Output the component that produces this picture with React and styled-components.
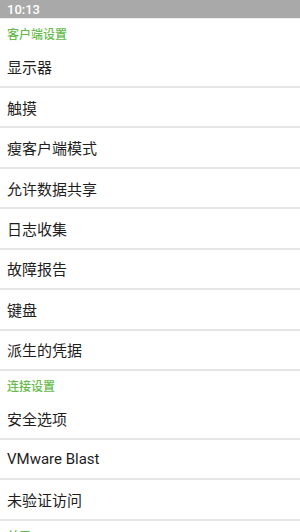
import styled, { createGlobalStyle } from "styled-components";

const GlobalStyle = createGlobalStyle`
  html, body {
    margin: 0;
    padding: 0;
    background: #ffffff;
  }
  body {
    font-family: Roboto, "Noto Sans CJK SC", sans-serif;
  }
`;

const sections = [
  {
    title: "客户端设置",
    items: [
      "显示器",
      "触摸",
      "瘦客户端模式",
      "允许数据共享",
      "日志收集",
      "故障报告",
      "键盘",
      "派生的凭据",
    ],
  },
  {
    title: "连接设置",
    items: ["安全选项", "VMware Blast", "未验证访问"],
  },
  {
    title: "关于",
    items: ["版本"],
  },
];

const Screen = styled.div`
  width: 300px;
  height: 532px;
  overflow: hidden;
  background: #ffffff;
`;

const StatusBar = styled.div`
  height: 18px;
  background: #a9a9a9;
  border-bottom: 1px solid #ececec;
  display: flex;
  align-items: center;
  padding-left: 7px;
  color: #ffffff;
  font-size: 13px;
  font-weight: 500;
`;

const SectionTitle = styled.div`
  height: 28.5px;
  display: flex;
  align-items: flex-start;
  padding: 6px 0 0 7px;
  box-sizing: border-box;
  color: #66bb4c;
  font-size: 12px;
  font-weight: 500;
`;

const Row = styled.div`
  height: 40.45px;
  box-sizing: border-box;
  display: flex;
  align-items: center;
  padding-left: 7px;
  border-bottom: 2px solid #e6e6e6;
  color: #1e1e1e;
  font-size: 15px;
`;

export default function App() {
  return (
    <Screen>
      <GlobalStyle />
      <StatusBar>10:13</StatusBar>
      {sections.map((section) => (
        <div key={section.title}>
          <SectionTitle>{section.title}</SectionTitle>
          {section.items.map((item) => (
            <Row key={item}>{item}</Row>
          ))}
        </div>
      ))}
    </Screen>
  );
}
